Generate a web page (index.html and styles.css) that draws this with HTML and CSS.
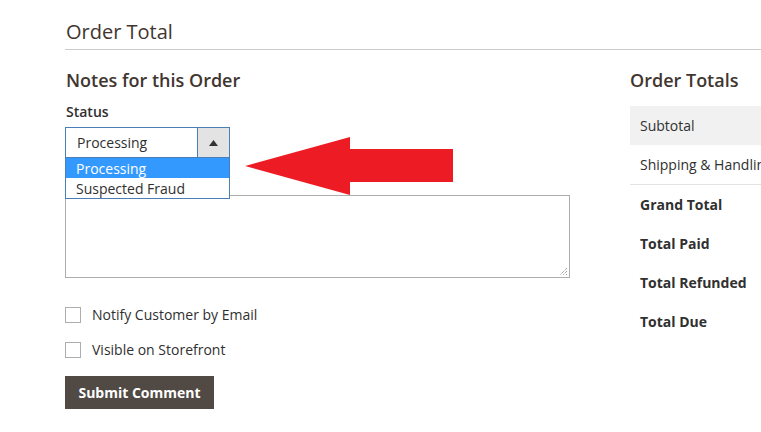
FILE: index.html
```html
<!DOCTYPE html>
<html>
<head>
<meta charset="utf-8">
<link rel="stylesheet" href="styles.css">
</head>
<body>
<div class="page">
  <h1 class="section-title">Order Total</h1>
  <div class="columns">
    <div class="left">
      <h2 class="sub-title">Notes for this Order</h2>
      <div class="label">Status</div>
      <div class="select-wrap">
        <div class="select">
          <span class="select-value">Processing</span>
          <span class="select-btn"><svg width="9" height="6" viewBox="0 0 9 6"><polygon points="0,6 9,6 4.5,0" fill="#333"/></svg></span>
        </div>
        <ul class="dropdown">
          <li class="opt active">Processing</li>
          <li class="opt">Suspected Fraud</li>
        </ul>
      </div>
      <div class="textarea"><svg class="grip" width="9" height="9" viewBox="0 0 9 9"><path d="M8 1L1 8M8 4L4 8M8 7L7 8" stroke="#777" stroke-width="1" stroke-dasharray="1 1"/></svg></div>
      <label class="check"><span class="box"></span>Notify Customer by Email</label>
      <label class="check"><span class="box"></span>Visible on Storefront</label>
      <button class="btn">Submit Comment</button>
    </div>
    <div class="right">
      <h2 class="sub-title">Order Totals</h2>
      <div class="totals">
        <div class="row shade">Subtotal</div>
        <div class="row line">Shipping &amp; Handling</div>
        <div class="row bold">Grand Total</div>
        <div class="row bold">Total Paid</div>
        <div class="row bold">Total Refunded</div>
        <div class="row bold">Total Due</div>
      </div>
    </div>
  </div>
  <svg class="red-arrow" width="215" height="62" viewBox="0 0 215 62"><polygon points="0,29 105,0 105,12 208,12 208,45 105,45 105,58" fill="#ed1c24"/></svg>
</div>
</body>
</html>
```
FILE: styles.css
```css
html, body {
  margin: 0;
  padding: 0;
  background: #fff;
  overflow: hidden;
}
body {
  font-family: "Open Sans", "Liberation Sans", sans-serif;
  color: #303030;
  width: 761px;
  height: 432px;
}
.page {
  position: relative;
  padding-left: 65px;
  padding-top: 18px;
  width: 900px;
}
.section-title {
  margin: 0;
  font-size: 20px;
  line-height: 27px;
  font-weight: 400;
  color: #41362f;
  padding: 0 0 4px 1px;
  border-bottom: 1px solid #cccccc;
  width: 696px;
}
.columns {
  display: grid;
  grid-template-columns: 505px 260px;
  column-gap: 60px;
  margin-top: 18px;
}
.sub-title {
  margin: 0;
  font-size: 18px;
  line-height: 24px;
  font-weight: 600;
  color: #41362f;
  padding-left: 1px;
}
.right .sub-title {
  padding-left: 0;
}
.label {
  margin-top: 10px;
  font-size: 14px;
  line-height: 20px;
  font-weight: 600;
  padding-left: 1px;
}
.select-wrap {
  position: relative;
  margin-top: 5px;
  width: 165px;
}
.select {
  display: flex;
  height: 31px;
  box-sizing: border-box;
  border: 1px solid #4a7fb5;
  font-size: 14px;
}
.select-value {
  flex: 1;
  padding-left: 11px;
  line-height: 29px;
}
.select-btn {
  width: 31px;
  background: #e3e3e3;
  border-left: 1px solid #4a7fb5;
  display: flex;
  align-items: center;
  justify-content: center;
}
.dropdown {
  position: absolute;
  left: 0;
  top: 31px;
  width: 165px;
  box-sizing: border-box;
  margin: 0;
  padding: 0;
  list-style: none;
  background: #fff;
  border: 1px solid #4a7fb5;
  border-top: none;
  z-index: 2;
  font-size: 14px;
}
.opt {
  height: 20px;
  line-height: 21px;
  padding-left: 10px;
}
.opt.active {
  background: #3399ff;
  color: #fff;
}
.textarea {
  position: relative;
  margin-top: 37px;
  height: 83px;
  box-sizing: border-box;
  border: 1px solid #adadad;
}
.grip {
  position: absolute;
  right: 1px;
  bottom: 1px;
}
.check {
  display: flex;
  align-items: center;
  font-size: 14px;
  line-height: 20px;
  color: #303030;
  height: 16px;
}
.check + .check {
  margin-top: 19px;
}
.textarea + .check {
  margin-top: 29px;
}
.box {
  width: 16px;
  height: 16px;
  box-sizing: border-box;
  border: 1px solid #adadad;
  margin-right: 11px;
  background: #fff;
}
.btn {
  margin-top: 18px;
  width: 149px;
  height: 33px;
  border: none;
  background: #514943;
  color: #fff;
  font-family: "Open Sans", "Liberation Sans", sans-serif;
  font-size: 14px;
  font-weight: 700;
  padding: 0;
  display: block;
}
.totals {
  margin-top: 14px;
  font-size: 14px;
}
.row {
  height: 39px;
  line-height: 39px;
  padding-left: 10px;
  white-space: nowrap;
}
.row.shade {
  background: #f1f1f1;
}
.row.line {
  border-bottom: 1px solid #e3e3e3;
}
.row.bold {
  font-weight: 700;
}
.red-arrow {
  position: absolute;
  left: 245px;
  top: 137px;
}
```
